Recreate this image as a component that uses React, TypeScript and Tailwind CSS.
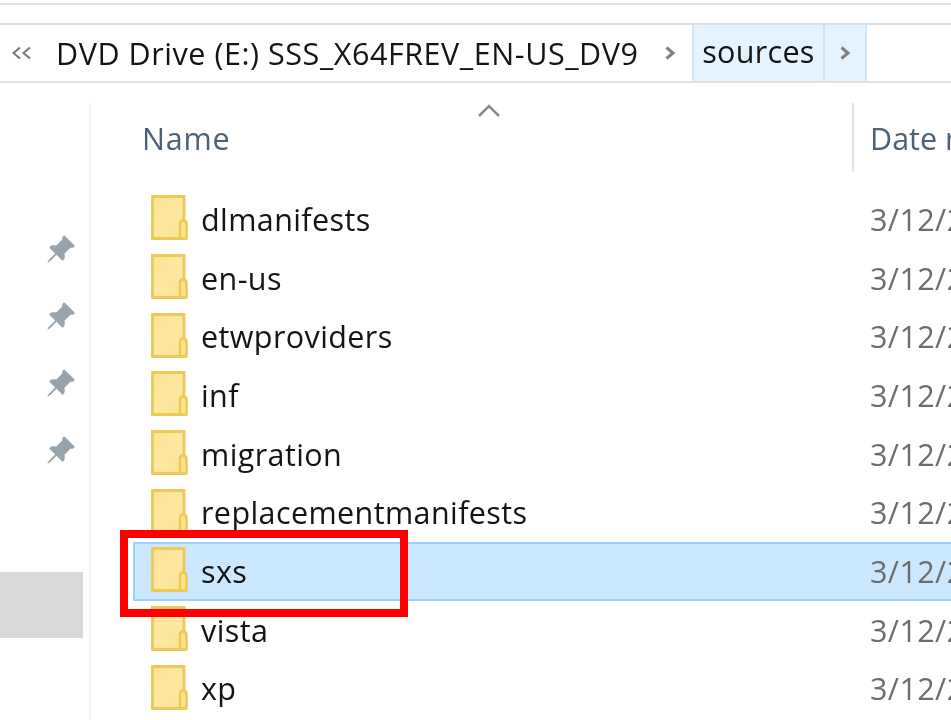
import { BsPinAngleFill } from "react-icons/bs";

const folders = [
  "dlmanifests",
  "en-us",
  "etwproviders",
  "inf",
  "migration",
  "replacementmanifests",
  "sxs",
  "vista",
  "xp",
];

const FolderIcon = () => (
  <svg width="37" height="45" viewBox="0 0 37 45" className="shrink-0">
    <defs>
      <linearGradient id="folderFill" x1="0" y1="0" x2="1" y2="1">
        <stop offset="0" stopColor="#fde28e" />
        <stop offset="0.5" stopColor="#fee8a2" />
        <stop offset="1" stopColor="#fde28e" />
      </linearGradient>
    </defs>
    <path d="M1.500 1.500H33V43.500H1.500Z" fill="url(#folderFill)" stroke="#edc95a" strokeWidth="2.800" />
    <path d="M29 43.500V29Q29 25.500 32 25.500Q35.500 25.500 35.500 29V43.500Z" fill="#fde28e" stroke="#edc95a" strokeWidth="2.500" />
  </svg>
);

const Chevron = () => (
  <svg width="14" height="16" viewBox="0 0 14 16" className="shrink-0">
    <path d="M3.500 2.500L10 8L3.500 13.500" fill="none" stroke="#808080" strokeWidth="3" />
  </svg>
);

export default function App() {
  return (
    <div
      className="relative flex h-[720px] w-[951px] flex-col overflow-hidden bg-white text-[30.500px] tracking-[0.4px] blur-[0.7px]"
      style={{ fontFamily: '"Open Sans", "Noto Sans", sans-serif' }}
    >
      {/* top chrome */}
      <div className="mt-[3px] h-[22px] border-y-2 border-[#e0e0e0]" />
      <div className="flex h-[58px] items-center border-b-2 border-[#e0e0e0] text-[#141414]">
        <svg width="24" height="16" viewBox="0 0 24 16" className="ml-[10px] shrink-0">
          <path
            d="M10 2.500L3.500 8L10 13.500M20 2.500L13.500 8L20 13.500"
            fill="none"
            stroke="#777"
            strokeWidth="2"
          />
        </svg>
        <span className="ml-[22px] w-[584px] shrink-0 leading-none tracking-[0.55px] whitespace-nowrap">
          DVD Drive (E:) SSS_X64FREV_EN-US_DV9
        </span>
        <span className="ml-[23px] shrink-0">
          <Chevron />
        </span>
        <div className="ml-[15px] flex h-full shrink-0 items-stretch border-x-2 border-[#cce8ff] bg-[#e5f3ff]">
          <span className="flex w-[131px] items-center justify-center border-r-2 border-[#cce8ff] pb-[2px] tracking-[0.3px]">
            sources
          </span>
          <span className="flex w-[40px] items-center justify-center">
            <Chevron />
          </span>
        </div>
      </div>

      <div className="flex min-h-0 flex-1">
        {/* nav pane */}
        <div className="mt-[20px] flex w-[91px] shrink-0 flex-col items-end border-r-2 border-[#f3f3f3]">
          <div className="mt-[131px] flex w-full flex-col items-end gap-[36px] pr-[13px]">
            {[0, 1, 2, 3].map((i) => (
              <BsPinAngleFill key={i} className="h-[31px] w-[31px] text-[#98a3ab]" />
            ))}
          </div>
          <div className="mt-[106px] mr-[6px] h-[66px] w-[83px] bg-[#d9d9d9]" />
        </div>

        {/* file list */}
        <div className="min-w-0 flex-1">
          <div className="relative mt-[20px] flex h-[69px] items-center">
            <span className="ml-[51px] w-[710px] shrink-0 pt-[3px] tracking-[0.8px] text-[#4d6079]">Name</span>
            <span className="h-full shrink-0 border-l-2 border-[#e5e5e5]" />
            <span className="ml-[16px] pt-[3px] tracking-normal whitespace-nowrap text-[#4d6079]">Date modified</span>
            <svg width="24" height="15" viewBox="0 0 24 15" className="absolute top-0 left-[386px]">
              <path d="M2 13L12 3L22 13" fill="none" stroke="#8b8b8b" strokeWidth="2.500" />
            </svg>
          </div>
          <div className="mt-[18px] ml-[42px] flex flex-col">
            {folders.map((name) => {
              const selected = name === "sxs";
              return (
                <div
                  key={name}
                  className={
                    selected
                      ? "flex h-[58.700px] shrink-0 items-center border-y-2 border-l-2 border-[#99d1ff] bg-[#cce8ff]"
                      : "flex h-[58.700px] shrink-0 items-center pl-[2px]"
                  }
                >
                  <span className="mb-[3px] ml-[16px] flex shrink-0">
                    <FolderIcon />
                  </span>
                  <span className="ml-[13px] w-[669px] shrink-0 pt-[1px] whitespace-nowrap text-[#141414]">{name}</span>
                  <span className="pt-[1px] whitespace-nowrap text-[#6d6d6d]">3/12/2019</span>
                </div>
              );
            })}
          </div>
        </div>
      </div>

      {/* red highlight */}
      <div className="absolute top-[530px] left-[120px] h-[87px] w-[288px] border-[8px] border-[#ff0000]" />
    </div>
  );
}
